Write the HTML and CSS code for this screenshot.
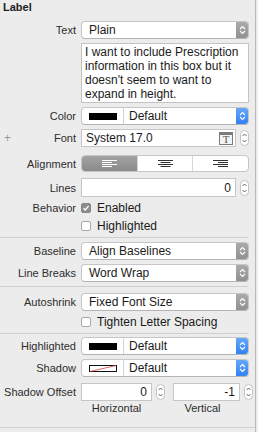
FILE: index.html
```html
<!DOCTYPE html>
<html lang="en">
<head>
  <meta charset="UTF-8" />
  <title>Label Attributes</title>
  <link rel="stylesheet" href="styles.css">
</head>
<body>
  <div class="panel">
    <div class="title">Label</div>

    <div class="row r-text">
      <span class="lbl">Text</span>
      <div class="popup"><span class="val">Plain</span><span class="arrows gray"><svg width="7" height="10" viewBox="0 0 7 10"><path d="M1 4 L3.5 1.5 L6 4 M1 6 L3.5 8.5 L6 6" fill="none" stroke="#fff" stroke-width="1.1"/></svg></span></div>
    </div>
    <div class="row r-area">
      <span class="lbl"></span>
      <div class="area">I want to include Prescription<br>information in this box but it<br>doesn't seem to want to<br>expand in height.</div>
    </div>

    <div class="row r-color">
      <span class="lbl">Color</span>
      <div class="popup"><span class="swatch"><span class="black"></span></span><span class="val">Default</span><span class="arrows blue"><svg width="7" height="10" viewBox="0 0 7 10"><path d="M1 4 L3.5 1.5 L6 4 M1 6 L3.5 8.5 L6 6" fill="none" stroke="#fff" stroke-width="1.1"/></svg></span></div>
    </div>

    <div class="row r-font">
      <span class="plus">+</span>
      <span class="lbl">Font</span>
      <div class="field font"><span>System 17.0</span><span class="ticon">T</span></div>
      <span class="stepper"><svg width="9" height="16" viewBox="0 0 9 16"><path d="M2.5 6 L4.5 4 L6.5 6 M2.5 10 L4.5 12 L6.5 10" fill="none" stroke="#555" stroke-width="0.9"/></svg></span>
    </div>

    <div class="row r-align">
      <span class="lbl">Alignment</span>
      <div class="seg">
        <span class="part on"><svg width="15" height="8" viewBox="0 0 15 8"><path d="M0 0.5H15M0 2.5H10M0 4.5H15M0 6.5H10" stroke="#fff" stroke-width="1"/></svg></span>
        <span class="part"><svg width="15" height="8" viewBox="0 0 15 8"><path d="M0 0.5H15M2.5 2.5H12.5M0 4.5H15M2.5 6.5H12.5" stroke="#333" stroke-width="1"/></svg></span>
        <span class="part"><svg width="15" height="8" viewBox="0 0 15 8"><path d="M0 0.5H15M5 2.5H15M0 4.5H15M5 6.5H15" stroke="#333" stroke-width="1"/></svg></span>
      </div>
    </div>

    <div class="row r-lines">
      <span class="lbl">Lines</span>
      <div class="field num">0</div>
      <span class="stepper"><svg width="9" height="16" viewBox="0 0 9 16"><path d="M2.5 6 L4.5 4 L6.5 6 M2.5 10 L4.5 12 L6.5 10" fill="none" stroke="#555" stroke-width="0.9"/></svg></span>
    </div>

    <div class="row r-check">
      <span class="lbl">Behavior</span>
      <span class="box checked"><svg width="10" height="10" viewBox="0 0 10 10"><path d="M2.5 5.2 L4.3 7 L7.6 2.8" fill="none" stroke="#fff" stroke-width="1.3"/></svg></span>
      <span class="ctext">Enabled</span>
    </div>
    <div class="row r-check2">
      <span class="lbl"></span>
      <span class="box"></span>
      <span class="ctext">Highlighted</span>
    </div>

    <div class="sep s1"></div>

    <div class="row r-base">
      <span class="lbl">Baseline</span>
      <div class="popup"><span class="val">Align Baselines</span><span class="arrows gray"><svg width="7" height="10" viewBox="0 0 7 10"><path d="M1 4 L3.5 1.5 L6 4 M1 6 L3.5 8.5 L6 6" fill="none" stroke="#fff" stroke-width="1.1"/></svg></span></div>
    </div>
    <div class="row r-breaks">
      <span class="lbl">Line Breaks</span>
      <div class="popup"><span class="val">Word Wrap</span><span class="arrows gray"><svg width="7" height="10" viewBox="0 0 7 10"><path d="M1 4 L3.5 1.5 L6 4 M1 6 L3.5 8.5 L6 6" fill="none" stroke="#fff" stroke-width="1.1"/></svg></span></div>
    </div>

    <div class="sep s2"></div>

    <div class="row r-shrink">
      <span class="lbl">Autoshrink</span>
      <div class="popup"><span class="val">Fixed Font Size</span><span class="arrows gray"><svg width="7" height="10" viewBox="0 0 7 10"><path d="M1 4 L3.5 1.5 L6 4 M1 6 L3.5 8.5 L6 6" fill="none" stroke="#fff" stroke-width="1.1"/></svg></span></div>
    </div>
    <div class="row r-tight">
      <span class="lbl"></span>
      <span class="box"></span>
      <span class="ctext">Tighten Letter Spacing</span>
    </div>

    <div class="sep s3"></div>

    <div class="row r-hl">
      <span class="lbl">Highlighted</span>
      <div class="popup"><span class="swatch"><span class="black"></span></span><span class="val">Default</span><span class="arrows blue"><svg width="7" height="10" viewBox="0 0 7 10"><path d="M1 4 L3.5 1.5 L6 4 M1 6 L3.5 8.5 L6 6" fill="none" stroke="#fff" stroke-width="1.1"/></svg></span></div>
    </div>
    <div class="row r-shadow">
      <span class="lbl">Shadow</span>
      <div class="popup"><span class="swatch"><svg width="28" height="7" viewBox="0 0 28 7"><rect x="0.5" y="0.5" width="27" height="6" fill="#fff" stroke="#111" stroke-width="1"/><path d="M1 6.5 L27 0.5" stroke="#e0393e" stroke-width="0.8"/></svg></span><span class="val">Default</span><span class="arrows blue"><svg width="7" height="10" viewBox="0 0 7 10"><path d="M1 4 L3.5 1.5 L6 4 M1 6 L3.5 8.5 L6 6" fill="none" stroke="#fff" stroke-width="1.1"/></svg></span></div>
    </div>

    <div class="row r-offset">
      <span class="lbl">Shadow Offset</span>
      <div class="pair">
        <div class="field num small">0</div>
        <span class="stepper"><svg width="9" height="16" viewBox="0 0 9 16"><path d="M2.5 6 L4.5 4 L6.5 6 M2.5 10 L4.5 12 L6.5 10" fill="none" stroke="#555" stroke-width="0.9"/></svg></span>
      </div>
      <div class="pair second">
        <div class="field num small">-1</div>
        <span class="stepper"><svg width="9" height="16" viewBox="0 0 9 16"><path d="M2.5 6 L4.5 4 L6.5 6 M2.5 10 L4.5 12 L6.5 10" fill="none" stroke="#555" stroke-width="0.9"/></svg></span>
      </div>
    </div>
    <div class="row r-sub">
      <span class="lbl"></span>
      <span class="sub h">Horizontal</span>
      <span class="sub v">Vertical</span>
    </div>

    <div class="sep s4"></div>
  </div>
</body>
</html>
```

FILE: styles.css
```css
html, body {
  margin: 0;
  padding: 0;
  background: #ececec;
}
body {
  font-family: "Liberation Sans", Arial, sans-serif;
  font-size: 11px;
  color: #262626;
  width: 258px;
  height: 432px;
  overflow: hidden;
}
.panel {
  position: relative;
  width: 256px;
  height: 432px;
  border-right: 1px solid #b9b9b9;
  box-sizing: border-box;
}
.title {
  font-weight: bold;
  font-size: 11px;
  padding: 1px 0 0 3px;
  height: 14px;
  line-height: 12px;
  color: #222;
}
.row {
  display: flex;
  align-items: center;
  position: relative;
}
.lbl {
  width: 76px;
  flex: none;
  text-align: right;
  padding-right: 5px;
  color: #2c2c2c;
}
.popup {
  width: 168px;
  height: 18px;
  box-sizing: border-box;
  background: #fff;
  border: 1px solid #c6c6c6;
  border-bottom-color: #b4b4b4;
  border-radius: 4px;
  display: flex;
  align-items: center;
  overflow: hidden;
  font-size: 12px;
  color: #1a1a1a;
}
.popup .val {
  flex: 1;
  padding-left: 7px;
}
.arrows {
  width: 13px;
  height: 18px;
  display: flex;
  align-items: center;
  justify-content: center;
  align-self: stretch;
  margin: -1px -1px -1px 0;
}
.arrows.gray {
  background: linear-gradient(#acacac, #8f8f8f);
}
.arrows.blue {
  background: linear-gradient(#68aaf8, #2f7ff3);
}
.swatch {
  width: 41px;
  align-self: stretch;
  border-right: 1px solid #d4d4d4;
  display: flex;
  align-items: center;
  justify-content: center;
}
.swatch + .val {
  padding-left: 5px;
}
.black {
  width: 28px;
  height: 7px;
  background: #000;
}
.area {
  width: 168px;
  height: 60px;
  box-sizing: border-box;
  background: #fff;
  border: 1px solid #c3c3c3;
  padding: 1px 0 0 3px;
  font-size: 12px;
  line-height: 14px;
  white-space: nowrap;
  overflow: hidden;
  color: #1a1a1a;
}
.field {
  width: 155px;
  height: 18px;
  box-sizing: border-box;
  background: #fff;
  border: 1px solid #c6c6c6;
  display: flex;
  align-items: center;
  font-size: 12px;
  color: #1a1a1a;
}
.field.font {
  justify-content: space-between;
  padding: 0 2px 0 4px;
}
.ticon {
  width: 14px;
  height: 13px;
  box-sizing: border-box;
  border: 1px solid #7a7a7a;
  border-top-width: 3px;
  font-family: "Liberation Serif", serif;
  font-size: 11px;
  line-height: 9px;
  text-align: center;
  color: #555;
  background: #f4f4f4;
}
.field.num {
  justify-content: flex-end;
  padding-right: 4px;
}
.stepper {
  width: 9px;
  height: 16px;
  margin-left: 4px;
  box-sizing: border-box;
  border: 1px solid #c3c3c3;
  border-radius: 5px;
  background: #fff;
  display: flex;
  align-items: center;
  justify-content: center;
}
.stepper svg {
  margin: -1px;
}
.plus {
  position: absolute;
  left: 4px;
  top: 2px;
  color: #999;
  font-size: 12px;
}
.seg {
  width: 168px;
  height: 17px;
  box-sizing: border-box;
  border: 1px solid #c6c6c6;
  border-radius: 4px;
  background: #fff;
  display: flex;
  overflow: hidden;
}
.part {
  flex: 1;
  display: flex;
  align-items: center;
  justify-content: center;
  border-left: 1px solid #d6d6d6;
}
.part:first-child {
  border-left: none;
}
.part.on {
  background: linear-gradient(#a3a3a3, #8a8a8a);
}
.box {
  width: 10px;
  height: 10px;
  box-sizing: border-box;
  border: 1px solid #a9a9a9;
  border-radius: 2px;
  background: #fff;
  display: flex;
}
.box.checked {
  background: #8d8d8d;
  border-color: #858585;
}
.box.checked svg {
  margin: -1px;
}
.ctext {
  margin-left: 6px;
  font-size: 12px;
  color: #1a1a1a;
}
.sep {
  height: 1px;
  background: #cfcfcf;
  width: 248px;
}
.pair {
  display: flex;
  align-items: center;
}
.pair.second {
  margin-left: 8px;
}
.field.small {
  width: 71px;
}
.pair.second .field.small {
  width: 67px;
}
.sub {
  font-size: 11px;
  color: #2c2c2c;
  text-align: center;
}
.sub.h {
  width: 71px;
}
.sub.v {
  width: 67px;
  margin-left: 17px;
}

.r-text { margin-top: 6px; }
.r-area { margin-top: 4px; }
.r-color { margin-top: 4px; }
.r-font { margin-top: 4px; }
.r-align { margin-top: 8px; }
.r-lines { margin-top: 6px; }
.r-lines .field { height: 19px; }
.r-check { margin-top: 6px; height: 10px; }
.r-check2 { margin-top: 8px; height: 10px; }
.s1 { margin-top: 6px; }
.r-base { margin-top: 4px; }
.r-breaks { margin-top: 4px; }
.s2 { margin-top: 4px; }
.r-shrink { margin-top: 6px; }
.r-tight { margin-top: 6px; height: 10px; }
.s3 { margin-top: 6px; }
.r-hl { margin-top: 3px; }
.r-shadow { margin-top: 4px; }
.r-offset { margin-top: 6px; }
.r-sub { margin-top: 1px; height: 12px; }
.s4 { margin-top: 13px; width: 255px; }
```
